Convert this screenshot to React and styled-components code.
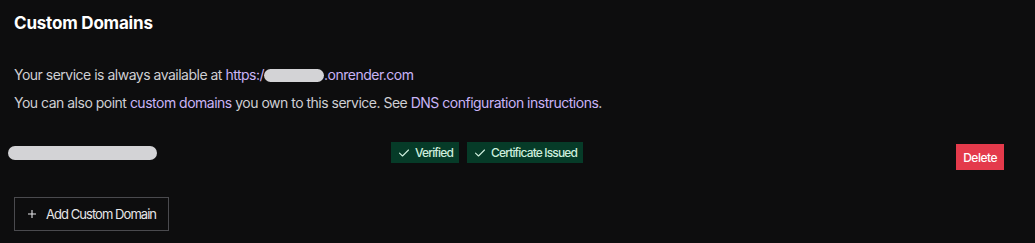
import styled, { createGlobalStyle } from 'styled-components';

const GlobalStyle = createGlobalStyle`
    html, body {
        margin: 0;
        padding: 0;
        background: #0d0d0e;
    }
    body {
        font-family: Inter, "Noto Sans", sans-serif;
        color: #d0d0d3;
    }
`;

const Section = styled.section`
    width: 1035px;
    height: 243px;
    box-sizing: border-box;
    padding: 12px 31px 0 14px;
    background: #0d0d0e;
`;

const Title = styled.h2`
    margin: 0;
    font-size: 17px;
    font-weight: 700;
    line-height: 22px;
    color: #ffffff;
    letter-spacing: -0.2px;
`;

const Text = styled.p`
    margin: 0;
    font-size: 14px;
    line-height: 28px;
    color: #cfcfd3;
    letter-spacing: -0.5px;
`;

const Intro = styled.div`
    margin-top: 27px;
`;

const Link = styled.a`
    color: #c9b4f7;
    text-decoration: none;
`;

const Redacted = styled.span`
    display: inline-block;
    vertical-align: middle;
    width: ${({ w }) => w}px;
    height: ${({ h }) => h}px;
    background: #d3d3d6;
    border-radius: ${({ h }) => h / 2}px;
    margin: ${({ m }) => m || '0'};
`;

const DomainRow = styled.div`
    display: grid;
    grid-template-columns: 377px auto 1fr;
    align-items: start;
    margin-top: 19px;
    height: 34px;
`;

const DomainName = styled(Redacted)`
    align-self: center;
`;

const Badges = styled.div`
    display: flex;
    gap: 8px;
    margin-top: 6px;
`;

const Badge = styled.span`
    display: inline-flex;
    align-items: center;
    gap: 5px;
    height: 21px;
    padding: 0 6px 0 7px;
    background: #063b28;
    color: #cdeedd;
    font-size: 12px;
    font-weight: 500;
    letter-spacing: -0.85px;
`;

const DeleteButton = styled.button`
    justify-self: end;
    height: 26px;
    padding: 0 7px;
    border: none;
    background: #e43a4b;
    color: #ffffff;
    font-family: inherit;
    font-size: 12px;
    font-weight: 500;
    letter-spacing: -0.5px;
    cursor: pointer;
    margin-top: 8px;
`;

const AddButton = styled.button`
    display: inline-flex;
    align-items: center;
    gap: 10px;
    margin-top: 27px;
    height: 34px;
    padding: 0 12px 0 13px;
    background: transparent;
    border: 1px solid #4a4a4e;
    color: #e6e6e8;
    font-family: inherit;
    font-size: 13px;
    cursor: pointer;
    letter-spacing: -0.95px;
`;

const Check = () => (
    <svg width="12" height="12" viewBox="0 0 12 12" fill="none">
        <path d="M1.5 6.2 L4.5 9 L10.5 3" stroke="currentColor" strokeWidth="1.1" strokeLinecap="round" strokeLinejoin="round" />
    </svg>
);

const Plus = () => (
    <svg width="8" height="8" viewBox="0 0 8 8" fill="none">
        <path d="M4 0 V8 M0 4 H8" stroke="currentColor" strokeWidth="1.1" />
    </svg>
);

const App = () => {
    return (
        <Section>
            <GlobalStyle />
            <Title>Custom Domains</Title>
            <Intro>
                <Text>
                    Your service is always available at{' '}
                    <Link href="#">
                        https:/<Redacted w={60} h={13} m="-2px 0 0 0" />.onrender.com
                    </Link>
                </Text>
                <Text>
                    You can also point <Link href="#">custom domains</Link> you own to this service. See{' '}
                    <Link href="#">DNS configuration instructions</Link>.
                </Text>
            </Intro>
            <DomainRow>
                <DomainName w={149} h={14} m="0 0 0 -6px" />
                <Badges>
                    <Badge>
                        <Check />
                        Verified
                    </Badge>
                    <Badge>
                        <Check />
                        Certificate Issued
                    </Badge>
                </Badges>
                <DeleteButton>Delete</DeleteButton>
            </DomainRow>
            <AddButton>
                <Plus />
                Add Custom Domain
            </AddButton>
        </Section>
    );
};

export default App;
